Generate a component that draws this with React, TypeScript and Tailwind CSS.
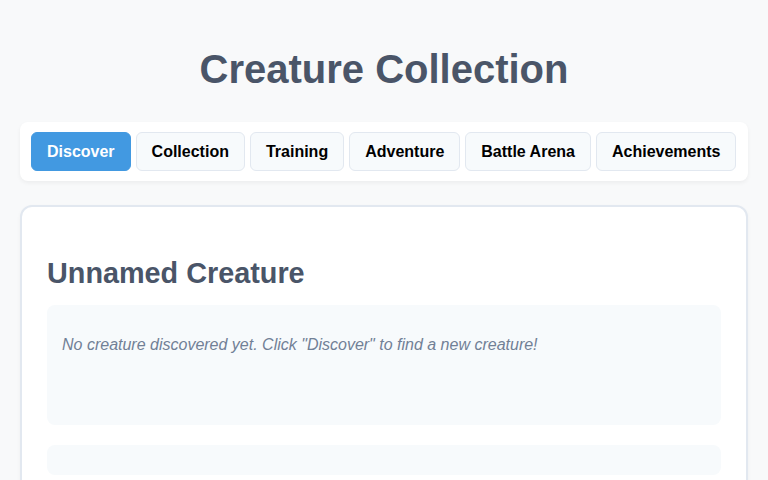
import React from "react";

const tabs = ["Discover", "Collection", "Training", "Adventure", "Battle Arena", "Achievements"];

export default function App() {
  return (
    <div className="min-h-screen bg-[#f8f9fa] px-5 pt-[40px]" style={{ fontFamily: '"Liberation Sans", Arial, sans-serif' }}>
      <h1 className="text-center text-[40px] font-bold leading-[58px] text-[#4a5568]">Creature Collection</h1>
      <div className="mt-[24px] flex gap-[5px] rounded-lg bg-white px-[11px] py-[10px] shadow-[0_2px_4px_rgba(0,0,0,0.05)]">
        {tabs.map((t, i) => (
          <button
            key={t}
            className={
              i === 0
                ? "rounded-md border border-[#4299e1] bg-[#4299e1] px-[15px] py-[9.5px] text-base font-bold leading-[18px] text-white"
                : "rounded-md border border-[#e2e8f0] bg-[#f7fafc] px-[15px] py-[9.5px] text-base font-bold leading-[18px] text-black"
            }
          >
            {t}
          </button>
        ))}
      </div>
      <div className="mt-[24px] rounded-xl border-2 border-[#e2e8f0] bg-white px-[25px] pb-[25px] pt-[25px] shadow-[0_2px_4px_rgba(0,0,0,0.04)]">
        <h2 className="mt-[23px] text-[28.8px] font-bold leading-[36px] text-[#4a5568]">Unnamed Creature</h2>
        <div className="mt-[14px] h-[120px] rounded-lg bg-[#f7fafc] px-[15px] pt-[31px]">
          <p className="text-base italic leading-[18px] text-[#718096]">
            No creature discovered yet. Click "Discover" to find a new creature!
          </p>
        </div>
        <div className="mt-[20px] h-[30px] rounded-lg bg-[#f7fafc]"></div>
      </div>
    </div>
  );
}
